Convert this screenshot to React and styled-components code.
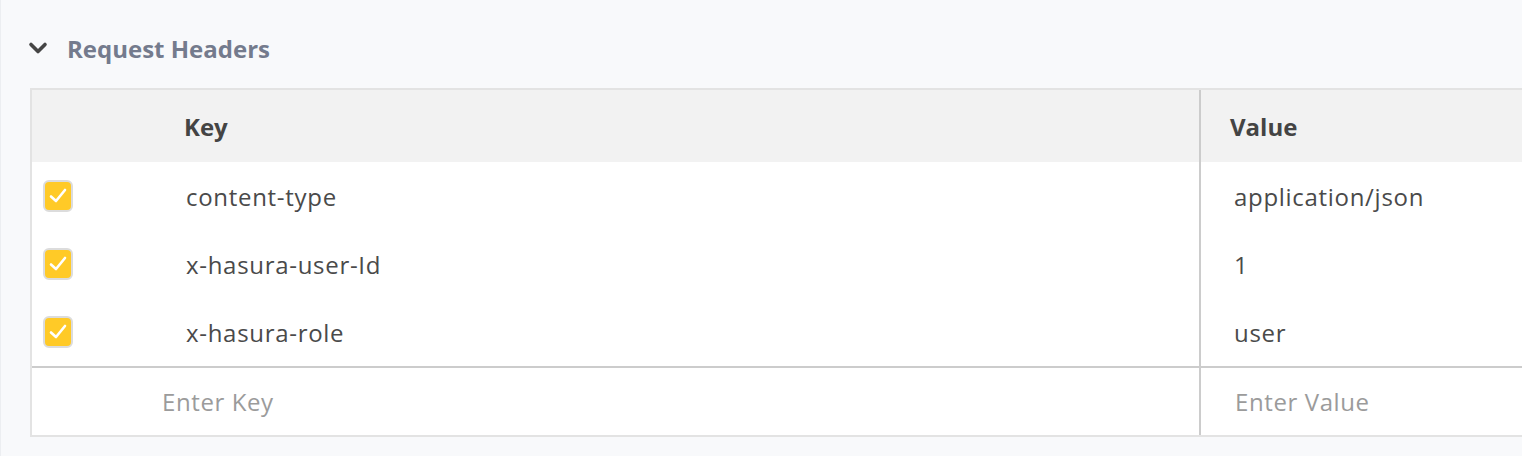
import React from "react";
import styled, { createGlobalStyle } from "styled-components";

const Global = createGlobalStyle`
  html, body { margin: 0; padding: 0; background: #f8f9fb; overflow: hidden; }
  body { font-family: "Open Sans", "Noto Sans", sans-serif; }
`;

const Page = styled.div`
  width: 1522px;
  height: 456px;
  box-sizing: border-box;
  border-left: 1px solid #eceef1;
  padding-top: 30px;
  overflow: hidden;
`;

const Heading = styled.div`
  display: flex;
  align-items: center;
  gap: 19px;
  padding-left: 27px;
  height: 36px;
`;

const Title = styled.span`
  font-size: 24px;
  font-weight: 700;
  color: #747b8d;
`;

const Table = styled.div`
  margin-top: 22px;
  margin-left: 29px;
  width: 1560px;
  border: 2px solid #e3e3e3;
  border-right: none;
  background: #fff;
  display: grid;
  grid-template-columns: 1169px 1fr;
`;

const Cell = styled.div`
  height: ${(p) => p.$h}px;
  display: flex;
  align-items: center;
  box-sizing: border-box;
  background: ${(p) => (p.$head ? "#f2f2f2" : "#fff")};
  border-right: ${(p) => (p.$key ? "2px solid #cccccc" : "none")};
  border-top: ${(p) => (p.$sep ? "2px solid #cccccc" : "none")};
  padding-left: ${(p) => p.$pl}px;
`;

const HeadText = styled.span`
  font-size: 24px;
  font-weight: 700;
  color: #444;
`;

const Text = styled.span`
  font-size: 24px;
  letter-spacing: 0.7px;
  color: #4a4a4a;
`;

const Placeholder = styled.span`
  font-size: 24px;
  letter-spacing: 0.6px;
  color: #9b9b9b;
`;

const Check = styled.span`
  width: 30px;
  height: 32px;
  box-sizing: border-box;
  border: 2px solid #dcdcdc;
  border-radius: 6px;
  background: #ffca27;
  display: flex;
  align-items: center;
  justify-content: center;
  margin-left: 11px;
  margin-right: 113px;
  flex: none;
`;

const Chevron = () => (
  <svg width="20" height="14" viewBox="0 0 20 14">
    <path d="M3 3.5 L10 10.5 L17 3.5" fill="none" stroke="#454545" strokeWidth="3.6" strokeLinecap="round" strokeLinejoin="round" />
  </svg>
);

const Tick = () => (
  <svg width="22" height="20" viewBox="0 0 22 20">
    <path d="M4 10.5 L9 15 L18 4" fill="none" stroke="#fff" strokeWidth="2.6" strokeLinecap="round" strokeLinejoin="round" />
  </svg>
);

const rows = [
  ["content-type", "application/json"],
  ["x-hasura-user-Id", "1"],
  ["x-hasura-role", "user"],
];

export default function App() {
  return (
    <>
      <Global />
      <Page>
        <Heading>
          <Chevron />
          <Title>Request Headers</Title>
        </Heading>
        <Table>
          <Cell $head $key $h={72} $pl={152}>
            <HeadText>Key</HeadText>
          </Cell>
          <Cell $head $h={72} $pl={29}>
            <HeadText>Value</HeadText>
          </Cell>
          {rows.map(([k, v]) => (
            <React.Fragment key={k}>
              <Cell $key $h={68} $pl={0}>
                <Check><Tick /></Check>
                <Text>{k}</Text>
              </Cell>
              <Cell $h={68} $pl={33}>
                <Text>{v}</Text>
              </Cell>
            </React.Fragment>
          ))}
          <Cell $key $sep $h={69} $pl={130}>
            <Placeholder>Enter Key</Placeholder>
          </Cell>
          <Cell $sep $h={69} $pl={34}>
            <Placeholder>Enter Value</Placeholder>
          </Cell>
        </Table>
      </Page>
    </>
  );
}
